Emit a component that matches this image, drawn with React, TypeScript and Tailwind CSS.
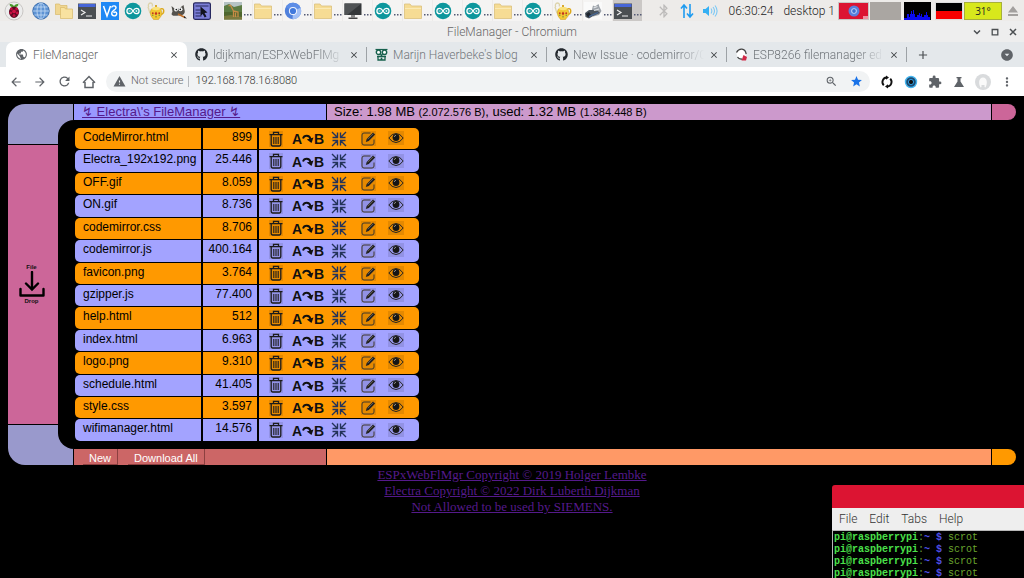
import React from "react";
import {
  MdPublic,
  MdArrowBack,
  MdArrowForward,
  MdRefresh,
  MdWarning,
  MdZoomIn,
  MdStar,
  MdExtension,
  MdMoreVert,
  MdClose,
  MdAdd,
  MdBluetooth,
  MdArrowDropDownCircle,
} from "react-icons/md";
import { FaGithub } from "react-icons/fa";

/* ---------- taskbar icons ---------- */

const svgBox = "block size-[18px] shrink-0";

function Raspberry() {
  return (
    <svg viewBox="0 0 20 20" className="block size-5 shrink-0">
      <circle cx="10" cy="10" r="9" fill="#ececec" stroke="#c9c6c4" strokeWidth="1" />
      <path d="M9.8 6.2C7 6.4 5.4 4.8 5.6 3.2 8 2.8 9.6 4 10 5.4 10.4 4 12 2.8 14.4 3.2 14.6 4.8 13 6.4 9.8 6.2z" fill="#4a9a2c" />
      <path d="M10 5.8c2.6 0 5 2 5 5.2 0 3.2-2.6 6-5 6s-5-2.8-5-6c0-3.2 2.4-5.2 5-5.2z" fill="#5c0a22" />
      <circle cx="10" cy="10.4" r="1.9" fill="#d01045" />
      <circle cx="7.4" cy="8" r="1.4" fill="#c30e40" />
      <circle cx="12.6" cy="8" r="1.4" fill="#c30e40" />
      <circle cx="6.8" cy="12" r="1.4" fill="#c30e40" />
      <circle cx="13.2" cy="12" r="1.4" fill="#c30e40" />
      <circle cx="10" cy="14.6" r="1.5" fill="#c30e40" />
    </svg>
  );
}

function Globe() {
  return (
    <svg viewBox="0 0 18 18" className={svgBox}>
      <circle cx="9" cy="9" r="8.2" fill="#5e93d4" stroke="#3c6ead" />
      <g fill="none" stroke="#c5dcf5" strokeWidth="0.8">
        <ellipse cx="9" cy="9" rx="4" ry="8" />
        <path d="M9 1v16M1 9h16M2.5 5h13M2.5 13h13" />
      </g>
    </svg>
  );
}

function Folders() {
  return (
    <svg viewBox="0 0 18 18" className={svgBox}>
      <path d="M.5 2h4l1 1.5H12v9H.5z" fill="#f0d691" stroke="#d8b968" strokeWidth="0.7" />
      <path d="M5.5 5.500h4l1 1.500h7v9.500h-12z" fill="#f8e2a0" stroke="#d8b968" strokeWidth="0.7" />
    </svg>
  );
}

function Folder() {
  return (
    <svg viewBox="0 0 18 18" className={svgBox}>
      <path d="M.5 2H6l1.500 2h10v12.500H.5z" fill="#f6dc94" stroke="#dcc07c" strokeWidth="0.8" />
      <path d="M1 6.500h16" stroke="#fbeab5" />
    </svg>
  );
}

function Terminal() {
  return (
    <svg viewBox="0 0 18 18" className={svgBox}>
      <path d="M0 1.5h18V17H0z" fill="#4b4f52" />
      <path d="M.5 2h17v3H.5z" fill="#4766d8" />
      <path d="M3 8l4 2.500L3 13M8 14h6" fill="none" stroke="#eee" strokeWidth="1.2" />
    </svg>
  );
}

function Vnc() {
  return (
    <svg viewBox="0 0 18 18" className={svgBox}>
      <path d="M0 0h18v18H0z" fill="#1e88f5" />
      <path d="M2.500 4L6 14 9.500 4" fill="none" stroke="#fff" strokeWidth="1.5" />
      <path d="M10.500 5.500c1-2.500 4.800-2 4.500.5-.3 2-4 2.500-4.300 5-.2 3.500 5 4 5 .5 0-2-2.700-2-3-.5" fill="none" stroke="#fff" strokeWidth="1.4" />
    </svg>
  );
}

function Arduino() {
  return (
    <svg viewBox="0 0 18 18" className={svgBox}>
      <circle cx="9" cy="9" r="8.3" fill="#0d979d" />
      <path
        d="M9 9C7.800 7 6.800 6.300 5.600 6.300a2.700 2.700 0 0 0 0 5.400C6.800 11.700 7.800 11 9 9s2.200-2.700 3.400-2.700a2.700 2.700 0 0 1 0 5.400C11.200 11.700 10.200 11 9 9z"
        fill="none"
        stroke="#fff"
        strokeWidth="1.3"
      />
      <path d="M4.600 9h2M11.400 9h2M12.400 8v2" stroke="#fff" strokeWidth="0.7" />
    </svg>
  );
}

function Teapot() {
  return (
    <svg viewBox="0 0 18 18" className={svgBox}>
      <path d="M4.500 12C1 11 3 7.500.8 5M2 5c-1.500-1-.5-4 1.500-4s2.500 2 1.500 3.500" fill="none" stroke="#ddd3aa" strokeWidth="1.300" />
      <path d="M13.500 7c4-2 4.500 4.500.5 5.500" fill="none" stroke="#dda91b" strokeWidth="1.400" />
      <path d="M5 6.500h8c2.500 2.500 2.500 7-.5 9.500l-1 1.500h-5l-1-1.500C3 13.500 2.500 9 5 6.500z" fill="#f3c934" stroke="#c8951a" strokeWidth="0.500" />
      <ellipse cx="9" cy="6.500" rx="4" ry="1.700" fill="#fae27c" />
      <path d="M9 3v2" stroke="#d5a11c" strokeWidth="1.800" />
      <path d="M9 9.500l1.300 2L9 13.500l-1.300-2z" fill="#c23322" />
      <circle cx="5.800" cy="11.200" r=".9" fill="#c23322" />
      <circle cx="12.200" cy="11.200" r=".9" fill="#c23322" />
      <path d="M5.800 12.500v1.500M12.200 12.500v1.500M9 14v1.500" stroke="#427a34" strokeWidth="0.800" />
    </svg>
  );
}

function Gimp() {
  return (
    <svg viewBox="0 0 18 18" className={svgBox}>
      <path d="M1.500 4l3 2.500c2 0 3 .5 4.500 0L13.500 3l1 5c1 3-1 5.500-4.500 5.500-4 0-6 1-8-.5-1-1 0-2 .5-3.500z" fill="#55524d" />
      <circle cx="6" cy="7.500" r="1.900" fill="#f6f6f6" />
      <circle cx="10.500" cy="7.200" r="2" fill="#f6f6f6" />
      <circle cx="6.300" cy="7.600" r=".8" fill="#111" />
      <circle cx="10.300" cy="7.400" r=".8" fill="#111" />
      <path d="M8 12l7 3.500" stroke="#bb6a26" strokeWidth="1.400" />
      <path d="M14 14l3 2.500-3-.5z" fill="#222" />
    </svg>
  );
}

function Pointer() {
  return (
    <svg viewBox="0 0 18 18" className={svgBox}>
      <rect x=".6" y=".8" width="16.800" height="16.500" rx="1.500" fill="#7b7ed8" stroke="#28295f" strokeWidth="1.200" />
      <path d="M2.500 4h13M2.500 8h5M2.500 11h5M2.500 14h6" stroke="#26275a" />
      <path d="M7.500 4.500l7 6-3 .5 2 3.500-1.800 1-2-3.500-2.200 2z" fill="#12131f" />
    </svg>
  );
}

function Giraffe() {
  return (
    <svg viewBox="0 0 18 18" className={svgBox}>
      <path d="M0 0h18v7H0z" fill="#b6c3c4" />
      <path d="M0 4l5-2 5 3 8-2v8H0z" fill="#5c7b42" />
      <path d="M0 10h18v7.500H0z" fill="#4f662e" />
      <path d="M0 14l7-1 11 2v2.500H0z" fill="#7c7a3e" />
      <path d="M4.500 4l2-.8 3 5.800 4.500 1v5M9.500 9v6M11.500 10.500V15" fill="none" stroke="#c98b45" strokeWidth="1.300" />
    </svg>
  );
}

function Chromium() {
  return (
    <svg viewBox="0 0 18 18" className={svgBox}>
      <circle cx="9" cy="9" r="8.200" fill="#4f80dc" />
      <path d="M9 9L1.800 5.100A8.200 8.200 0 0 1 16.500 5.700z" fill="#5d8de6" />
      <path d="M9 9l7.500-3.300a8.200 8.200 0 0 1-8 11.500z" fill="#a3c0f5" />
      <circle cx="9" cy="9" r="4.100" fill="#f0f4fd" />
      <circle cx="9" cy="9" r="3.100" fill="#4179dc" />
    </svg>
  );
}

function Monitor() {
  return (
    <svg viewBox="0 0 18 18" className={svgBox}>
      <path d="M.5 1.500h17V13H.5z" fill="#35383a" />
      <path d="M.5 1.500h17L3 13H.5z" fill="#505355" />
      <path d="M7 13h4v2.500H7z" fill="#888" />
      <path d="M4.500 15.500h9V17h-9z" fill="#444" />
    </svg>
  );
}

function Engine() {
  return (
    <svg viewBox="0 0 18 18" className={svgBox}>
      <path d="M0 0h18v17.500H0z" fill="#fafafa" />
      <path d="M9 3.500l2 1L14.500 2l1 3 2 4-2.500 4-6 1.500-1.500-5z" fill="#9ba1a8" />
      <path d="M1 11l4-3 4 0 5 1 2 2-6 2.500-5 3-3.500-1.500z" fill="#4b545e" />
      <path d="M2 12l3-2 2 3-3 2.500z" fill="#1d242d" />
      <path d="M9.500 6l4-1.500M10 8.500l5-1.500" stroke="#dfe2e6" strokeWidth="1.200" />
      <path d="M5 14.500l9-4" stroke="#46689a" strokeWidth="1.200" />
    </svg>
  );
}

function NetArrows() {
  return (
    <svg viewBox="0 0 14 16" className="block h-4 w-[14px] shrink-0">
      <path d="M4 15V2.500M1 5.500L4 2l3 3.500M10 1v12.500M7 10.500l3 3.500 3-3.500" fill="none" stroke="#1e9bf0" strokeWidth="1.600" />
    </svg>
  );
}

function Speaker() {
  return (
    <svg viewBox="0 0 16 14" className="block h-[14px] w-4 shrink-0">
      <path d="M1 5h2.500L7 2v10L3.500 9H1z" fill="#36b0f3" />
      <path d="M9 4.500q1.700 2.500 0 5M11 3q3 4 0 8M13 1.500q4.200 5.500 0 11" fill="none" stroke="#7cc8f5" strokeWidth="1.100" />
    </svg>
  );
}

const launchers = [
  { name: "Web Browser", Icon: Globe },
  { name: "File Manager", Icon: Folders },
  { name: "Terminal", Icon: Terminal },
  { name: "VNC Viewer", Icon: Vnc },
  { name: "Arduino IDE", Icon: Arduino },
  { name: "Teapot", Icon: Teapot },
  { name: "Image Editor", Icon: Gimp },
  { name: "Click tool", Icon: Pointer },
];

const tasks = [
  { name: "Pictures", Icon: Giraffe },
  { name: "Folder", Icon: Folder },
  { name: "Chromium", Icon: Chromium },
  { name: "Folder", Icon: Folder },
  { name: "Display", Icon: Monitor },
  { name: "Arduino", Icon: Arduino },
  { name: "Folder", Icon: Folder },
  { name: "Arduino", Icon: Arduino },
  { name: "Arduino", Icon: Arduino },
  { name: "Folder", Icon: Folder },
  { name: "Arduino", Icon: Arduino },
  { name: "Teapot", Icon: Teapot },
  { name: "Engine", Icon: Engine },
  { name: "Terminal", Icon: Terminal, active: true },
];

function Taskbar() {
  return (
    <header className="flex h-[21px] items-center bg-[#edebe9] pl-1 text-[12px] font-light text-[#222]">
      <button aria-label="Menu" className="mr-2">
        <Raspberry />
      </button>
      <nav className="flex items-center gap-[5px]">
        {launchers.map(({ name, Icon }) => (
          <button key={name} aria-label={name}>
            <Icon />
          </button>
        ))}
      </nav>
      <div className="ml-3 flex h-full items-center">
        {tasks.map(({ name, Icon, active }, i) => (
          <button
            key={i}
            aria-label={name}
            className={
              active
                ? "flex h-full w-[30px] items-center border-r border-[#edebe9] bg-[#cbc8c6] pl-px"
                : "flex h-full w-[30px] items-center border-r border-[#edebe9] bg-[#f5f4f3] pl-px"
            }
          >
            <Icon />
            <svg viewBox="0 0 8 2" className="mt-2 ml-[2px] block h-[2px] w-2 shrink-0">
              <path d="M0 0h1.500v1.500H0zM3 0h1.500v1.500H3zM6 0h1.500v1.500H6z" fill="#555a75" />
            </svg>
          </button>
        ))}
      </div>
      <div className="ml-auto flex h-full items-center">
        <MdBluetooth className="mr-2 size-4 text-[#bdbbba]" />
        <NetArrows />
        <span className="mr-[10px] ml-2">
          <Speaker />
        </span>
        <time className="mr-[10px]">06:30:24</time>
        <span className="mr-[3px]">desktop 1</span>
        <div className="relative mr-px flex h-[18px] w-[31px] items-center justify-center border border-[#c9c6c4] bg-[#dc1432]">
          <svg viewBox="0 0 12 12" className="size-3">
            <circle cx="6" cy="6" r="5.500" fill="#5a7fdc" />
            <circle cx="6" cy="6" r="2.800" fill="#c8d8f8" />
            <circle cx="6" cy="6" r="1.900" fill="#3f6fd0" />
          </svg>
          <span className="absolute right-0 bottom-0 h-[3px] w-[5px] bg-[#f08fa0]" />
        </div>
        <div className="mr-[3px] h-[18px] w-[31px] bg-[#aaa6a2]" />
        <svg viewBox="0 0 27 18" className="mr-1 block h-[18px] w-[27px]">
          <path d="M0 0h27v18H0z" fill="#000" />
          <path d="M0 18v-2h3v-4h2v3h1v-3h1V9h1v3h1V8h1v4h1v3h2v-2h2v-2h1v3h1v-2h1v3h2v-2h2v-3h1v3h1v2h2v3z" fill="#0a0af0" />
        </svg>
        <div className="mr-px flex h-[18px] w-7 flex-col border border-[#ddd]">
          <span className="flex-1 bg-black" />
          <span className="flex-1 bg-[#f80000]" />
        </div>
        <div className="mr-[6px] h-[18px] w-[38px] border border-[#a7b03a] bg-[#d8e81c] text-center font-['Open_Sans',sans-serif] text-[10px] leading-4 font-normal text-[#222]">
          31°
        </div>
        <svg viewBox="0 0 10 10" className="mr-[6px] block size-[10px]">
          <path d="M5 0l5 6.500H0zM0 8h10v2H0z" fill="#a3a09e" />
        </svg>
      </div>
    </header>
  );
}

/* ---------- browser chrome ---------- */

function TitleBar() {
  return (
    <div className="grid h-[21px] grid-cols-[1fr_auto_1fr] items-center bg-[#eee] text-[12px] font-light text-[#666]">
      <span />
      <h1>FileManager - Chromium</h1>
      <div className="flex items-center justify-end gap-[10px] pr-[7px]">
        <button aria-label="Minimize">
          <svg viewBox="0 0 8 8" className="block size-2">
            <path d="M1 2.500l3 3 3-3" fill="none" stroke="#4b4f52" strokeWidth="1.500" />
          </svg>
        </button>
        <button aria-label="Maximize">
          <svg viewBox="0 0 8 8" className="block size-2">
            <path d="M1.200 1.500h5.600v5.300H1.200z" fill="none" stroke="#4b4f52" strokeWidth="1.300" />
          </svg>
        </button>
        <button aria-label="Close window">
          <svg viewBox="0 0 8 8" className="block size-2">
            <path d="M1 1l6 6M7 1L1 7" stroke="#4b4f52" strokeWidth="1.500" />
          </svg>
        </button>
      </div>
    </div>
  );
}

function BlogIcon() {
  return (
    <svg viewBox="0 0 13 13" className="size-[13px] shrink-0">
      <path d="M.5 1.500h12" stroke="#17614d" strokeWidth="1.200" fill="none" />
      <circle cx="3.500" cy="4.300" r="2.200" fill="#fff" stroke="#17614d" strokeWidth="1.400" />
      <circle cx="9.500" cy="4.300" r="2.200" fill="#fff" stroke="#17614d" strokeWidth="1.400" />
      <path d="M5.500 6l1 1.500L7.500 6M2 8.500h9M3 8.500V12h3l.500-2 .5 2h3V8.500" fill="none" stroke="#17614d" strokeWidth="1.300" />
    </svg>
  );
}

function EspIcon() {
  return (
    <svg viewBox="0 0 13 13" className="size-[13px] shrink-0">
      <circle cx="6.500" cy="6" r="4.800" fill="#fff" />
      <path d="M1.500 4.500Q3.500.8 7 1.200t4.200 5M2.500 9Q4 11.500 7 11" fill="none" stroke="#444" strokeWidth="1.300" />
      <path d="M8.500 7l3.500 2-1 3.500H6.500z" fill="#d12a48" />
    </svg>
  );
}

const tabs = [
  { title: "ldijkman/ESPxWebFlMg", icon: <FaGithub className="size-[13px] shrink-0 text-[#24292f]" /> },
  { title: "Marijn Haverbeke's blog", icon: <BlogIcon />, whole: true },
  { title: "New Issue · codemirror/C", icon: <FaGithub className="size-[13px] shrink-0 text-[#24292f]" /> },
  { title: "ESP8266 filemanager ed", icon: <EspIcon /> },
];

function Tabs() {
  return (
    <div className="flex h-[25px] items-end bg-[#e4e8eb] pl-[6px] text-[12px] font-light">
      <div className="flex h-full w-[181px] items-center gap-[5px] rounded-t-[7px] bg-white pr-2 pl-[9px] text-[#666]">
        <MdPublic className="size-[13px] text-[#5f6368]" />
        <span className="flex-1">FileManager</span>
        <button aria-label="Close tab">
          <MdClose className="size-[10px] text-[#3c4043]" />
        </button>
      </div>
      {tabs.map(({ title, icon, whole }) => (
        <div key={title} className="flex h-full w-[180px] items-center pl-2 text-[#70757a]">
          {icon}
          <span
            className={
              whole
                ? "mr-[5px] ml-[5px] w-[131px] whitespace-nowrap"
                : "mr-[5px] ml-[5px] w-[131px] whitespace-nowrap [mask-image:linear-gradient(to_right,black_80%,transparent)]"
            }
          >
            {title}
          </span>
          <button aria-label="Close tab">
            <MdClose className="size-[10px] text-[#3c4043]" />
          </button>
          <span className="ml-[7px] h-[15px] w-px bg-[#9da2a6]" />
        </div>
      ))}
      <button aria-label="New tab" className="ml-[9px] self-center">
        <MdAdd className="size-[14px] text-[#4b4f52]" />
      </button>
      <button aria-label="Search tabs" className="mr-[10px] ml-auto self-center">
        <MdArrowDropDownCircle className="size-[14px] text-[#5f6368]" />
      </button>
    </div>
  );
}

function Toolbar() {
  return (
    <div className="flex h-[29px] items-center bg-white pl-[9px]">
      <div className="flex items-center gap-[10px] text-[#5f6368]">
        <button aria-label="Back">
          <MdArrowBack className="size-[14px]" />
        </button>
        <button aria-label="Forward">
          <MdArrowForward className="size-[14px]" />
        </button>
        <button aria-label="Reload">
          <MdRefresh className="size-[15px]" />
        </button>
        <button aria-label="Home">
          <svg viewBox="0 0 14 14" className="block size-[14px]">
            <path d="M3 7v5.500h8V7M1 7.800L7 1.500l6 6.300" fill="none" stroke="#5f6368" strokeWidth="1.500" />
          </svg>
        </button>
      </div>
      <div className="ml-[10px] flex h-[21px] flex-1 items-center rounded-full bg-[#f1f3f4] pr-[7px] pl-[7px] text-[11px] font-light">
        <MdWarning className="size-[13px] text-[#5f6368]" />
        <label htmlFor="address" className="ml-[5px] text-[#666]">
          Not secure
        </label>
        <span className="mr-[6px] ml-[5px] h-[11px] w-px bg-[#b5b8bb]" />
        <input id="address" defaultValue="192.168.178.16:8080" className="min-w-0 flex-1 bg-transparent text-[#333] outline-none" />
        <button aria-label="Zoom" className="mr-3">
          <MdZoomIn className="size-[13px] text-[#5f6368]" />
        </button>
        <button aria-label="Bookmark">
          <MdStar className="size-[13px] text-[#1a73e8]" />
        </button>
      </div>
      <div className="flex items-center gap-[10px] pr-[10px] pl-[10px] text-[#5f6368]">
        <button aria-label="Sync extension">
          <svg viewBox="0 0 14 14" className="block size-[14px]">
            <path d="M6.500 2.500A4.500 4.500 0 0 0 3.800 10.200M7.500 11.500A4.500 4.500 0 0 0 10.200 3.800" fill="none" stroke="#111" strokeWidth="1.900" />
            <path d="M6 .5l3 2-3 2.300zM8 9.200l-3 2.300 3 2z" fill="#111" />
          </svg>
        </button>
        <button aria-label="Recorder extension">
          <svg viewBox="0 0 14 14" className="block size-[14px]">
            <circle cx="7" cy="7" r="5.500" fill="#1b4a72" stroke="#45b5ee" strokeWidth="1.400" />
            <circle cx="7" cy="7" r="2.600" fill="#111" stroke="#2f9de0" strokeWidth="1" />
          </svg>
        </button>
        <button aria-label="Extensions">
          <MdExtension className="size-[14px]" />
        </button>
        <button aria-label="Labs">
          <svg viewBox="0 0 14 14" className="block size-[14px]">
            <path d="M4.500 2h5v1.300h-1v3.200L12 12H2l3.500-5.500V3.300h-1z" fill="#5f6368" />
          </svg>
        </button>
        <button aria-label="Profile" className="-mx-px">
          <svg viewBox="0 0 16 16" className="block size-4">
            <circle cx="8" cy="8" r="8" fill="#d9dbdd" />
            <path d="M5.500 13.500C3 9 4 3.500 8 3.500s5 5.500 2.500 10l-1-.5v-2h-3v2z" fill="#fafafa" />
          </svg>
        </button>
        <button aria-label="More">
          <MdMoreVert className="size-[14px]" />
        </button>
      </div>
    </div>
  );
}

/* ---------- file manager page ---------- */

const files: [string, string][] = [
  ["CodeMirror.html", "899"],
  ["Electra_192x192.png", "25.446"],
  ["OFF.gif", "8.059"],
  ["ON.gif", "8.736"],
  ["codemirror.css", "8.706"],
  ["codemirror.js", "400.164"],
  ["favicon.png", "3.764"],
  ["gzipper.js", "77.400"],
  ["help.html", "512"],
  ["index.html", "6.963"],
  ["logo.png", "9.310"],
  ["schedule.html", "41.405"],
  ["style.css", "3.597"],
  ["wifimanager.html", "14.576"],
];

function RowActions() {
  return (
    <div className="grid grid-cols-[33px_32px_30px_28px_28px] items-center justify-items-center pr-[9px]">
      <button aria-label="Delete" className="bg-black/10">
        <svg viewBox="0 0 14 16" className="block h-4 w-[14px]">
          <path d="M.5 3.700h13M4.500 3.500V1.300h5v2.200M2.200 4v9.600q0 1.400 1.400 1.400h6.800q1.400 0 1.400-1.400V4" fill="none" stroke="#1c1c1c" strokeWidth="1.300" />
          <path d="M4.800 6v7M7 6v7M9.200 6v7" stroke="#1c1c1c" strokeWidth="1.100" />
        </svg>
      </button>
      <button aria-label="Rename" className="flex h-4 items-center pt-px text-[14px] leading-4 font-bold text-[#111]">
        A
        <svg viewBox="0 0 12 12" className="block size-3">
          <path d="M1 5.500C2 2 7.500 1.500 8.500 6" fill="none" stroke="#111" strokeWidth="1.900" />
          <path d="M11.500 4.500L9.500 10 4.800 6.500z" fill="#111" />
        </svg>
        B
      </button>
      <button aria-label="Compress">
        <svg viewBox="0 0 16 16" className="block size-4">
          <path
            d="M1 1l5 5M15 1l-5 5M1 15l5-5M15 15l-5-5M6.500 1.500v5h-5M9.500 1.500v5h5M6.500 14.500v-5h-5M9.500 14.500v-5h5"
            fill="none"
            stroke="#23335a"
            strokeWidth="1.400"
          />
        </svg>
      </button>
      <button aria-label="Edit" className="bg-black/10">
        <svg viewBox="0 0 15 15" className="block size-[15px]">
          <path d="M9.500 2H3Q1 2 1 4v8q0 2 2 2h8q2 0 2-2V8.500" fill="none" stroke="#40382c" strokeWidth="1" />
          <path d="M4.800 11l.9-3L12 1.500l2.200 2L7.800 10z" fill="#222" />
          <path d="M6.800 8.200l5.500-5.500" stroke="#8a8070" strokeWidth="0.600" />
        </svg>
      </button>
      <button aria-label="View" className="mb-px bg-black/10">
        <svg viewBox="0 0 16 14" className="block h-[14px] w-4">
          <path d="M.8 7Q4 2.500 8 2.500T15.200 7Q12 11.500 8 11.500T.8 7z" fill="none" stroke="#222" strokeWidth="1" />
          <circle cx="8" cy="6.500" r="3.400" fill="#161616" />
          <path d="M6.300 5.800q.2-1.200 1.600-1.400" fill="none" stroke="#bbb" strokeWidth="0.800" />
        </svg>
      </button>
    </div>
  );
}

function FileTable() {
  return (
    <table className="h-[315px] border-separate border-spacing-x-[2px] border-spacing-y-px text-[12px] leading-4 text-black">
      <tbody>
        {files.map(([name, size], i) => (
          <tr key={name} className={i % 2 === 0 ? "*:bg-[#ff9900]" : "*:bg-[#a3a3ff]"}>
            <td className="h-5 w-[126px] min-w-[126px] rounded-l-[5px] p-0 pt-px pl-2 align-top whitespace-nowrap">{name}</td>
            <td className="w-[54px] min-w-[54px] p-0 pt-px pr-[5px] text-right align-top">{size}</td>
            <td className="rounded-r-[5px] p-0 align-middle">
              <RowActions />
            </td>
          </tr>
        ))}
      </tbody>
    </table>
  );
}

function FileManager() {
  return (
    <main className="flex-1 bg-black px-2 pt-2 font-['Liberation_Sans',sans-serif]">
      <div className="overflow-hidden rounded-l-[17px] bg-[#9999cc]">
        <div className="flex h-4">
          <div className="w-[65px] shrink-0" />
          <div className="grid flex-1 grid-cols-[252px_1fr_24px] gap-px bg-black pl-px text-[13px] leading-4">
            <div className="bg-[#9999ff] pl-2 text-[#551a8b]">
              <a href="#top" className="underline">
                ↯ Electra\'s FileManager ↯
              </a>
            </div>
            <div className="bg-[#cc99cc] pl-[7px] whitespace-nowrap text-black">
              Size: 1.98 MB <small className="text-[11px]">(2.072.576 B)</small>, used: 1.32 MB{" "}
              <small className="text-[11px]">(1.384.448 B)</small>
            </div>
            <div className="rounded-r-full bg-[#cc6699]" />
          </div>
        </div>

        <div className="flex">
          <div className="flex w-[50px] shrink-0 flex-col py-6">
            <div className="flex flex-1 flex-col items-center justify-center border-y border-black bg-[#cc6699] pr-[3px] text-[6px] leading-[7px] font-bold text-[#111]">
              <span>File</span>
              <svg viewBox="0 0 26 27" className="block h-[27px] w-[26px]">
                <path d="M13 1v17M7 12.500l6 6 6-6" fill="none" stroke="#000" strokeWidth="2.400" strokeLinecap="round" />
                <path d="M1.500 18v6.500h23V18" fill="none" stroke="#000" strokeWidth="2.400" strokeLinecap="round" strokeLinejoin="round" />
              </svg>
              <span>Drop</span>
            </div>
          </div>
          <div className="flex-1 rounded-l-[16px] bg-black py-[7px] pl-[15px]">
            <FileTable />
          </div>
        </div>

        <div className="flex h-4">
          <div className="w-[65px] shrink-0" />
          <div className="grid flex-1 grid-cols-[252px_1fr_24px] gap-px bg-black pl-px">
            <div className="flex gap-[10px] bg-[#cc6666] pl-[9px] text-[11px] leading-4 text-white">
              <button className="h-4 border-r border-b border-[#8c4040] px-[6px] pt-px">New</button>
              <button className="h-4 border-r border-b border-[#8c4040] px-[6px] pt-px">Download All</button>
            </div>
            <div className="bg-[#ff9966]" />
            <div className="rounded-r-full bg-[#ff9900]" />
          </div>
        </div>
      </div>

      <footer className="flex flex-col items-center pt-[2px] font-['Liberation_Serif',serif] text-[13px] leading-4 text-[#551a8b]">
        <a href="#espx" className="underline">ESPxWebFlMgr Copyright © 2019 Holger Lembke</a>
        <a href="#electra" className="underline">Electra Copyright © 2022 Dirk Luberth Dijkman</a>
        <a href="#license" className="underline">Not Allowed to be used by SIEMENS.</a>
      </footer>
    </main>
  );
}

/* ---------- terminal window ---------- */

function TerminalWindow() {
  return (
    <section className="absolute right-0 bottom-0 h-[93px] w-[192px] overflow-hidden rounded-tl-[3px] bg-[#dc1432] pt-[23px]">
      <nav className="flex h-[22px] items-center gap-3 bg-[#eee] pl-[7px] text-[12px] font-light text-[#333]">
        <button>File</button>
        <button>Edit</button>
        <button>Tabs</button>
        <button>Help</button>
      </nav>
      <div className="h-12 border-t border-l border-[#b8b8b8] bg-black pt-px pl-px font-['Liberation_Mono',monospace] text-[10px] leading-3">
        {[0, 1, 2, 3].map((n) => (
          <p key={n} className="whitespace-pre">
            <b className="text-[#4be04b]">pi@raspberrypi</b>
            <span className="text-[#6a9a3a]">:</span>
            <b className="text-[#5050e8]">~ $</b>
            <span className="text-[#6aa52e]"> scrot</span>
          </p>
        ))}
      </div>
    </section>
  );
}

export default function App() {
  return (
    <div className="relative flex min-h-screen flex-col overflow-hidden bg-black font-['Roboto',sans-serif]">
      <Taskbar />
      <TitleBar />
      <Tabs />
      <Toolbar />
      <FileManager />
      <TerminalWindow />
    </div>
  );
}
